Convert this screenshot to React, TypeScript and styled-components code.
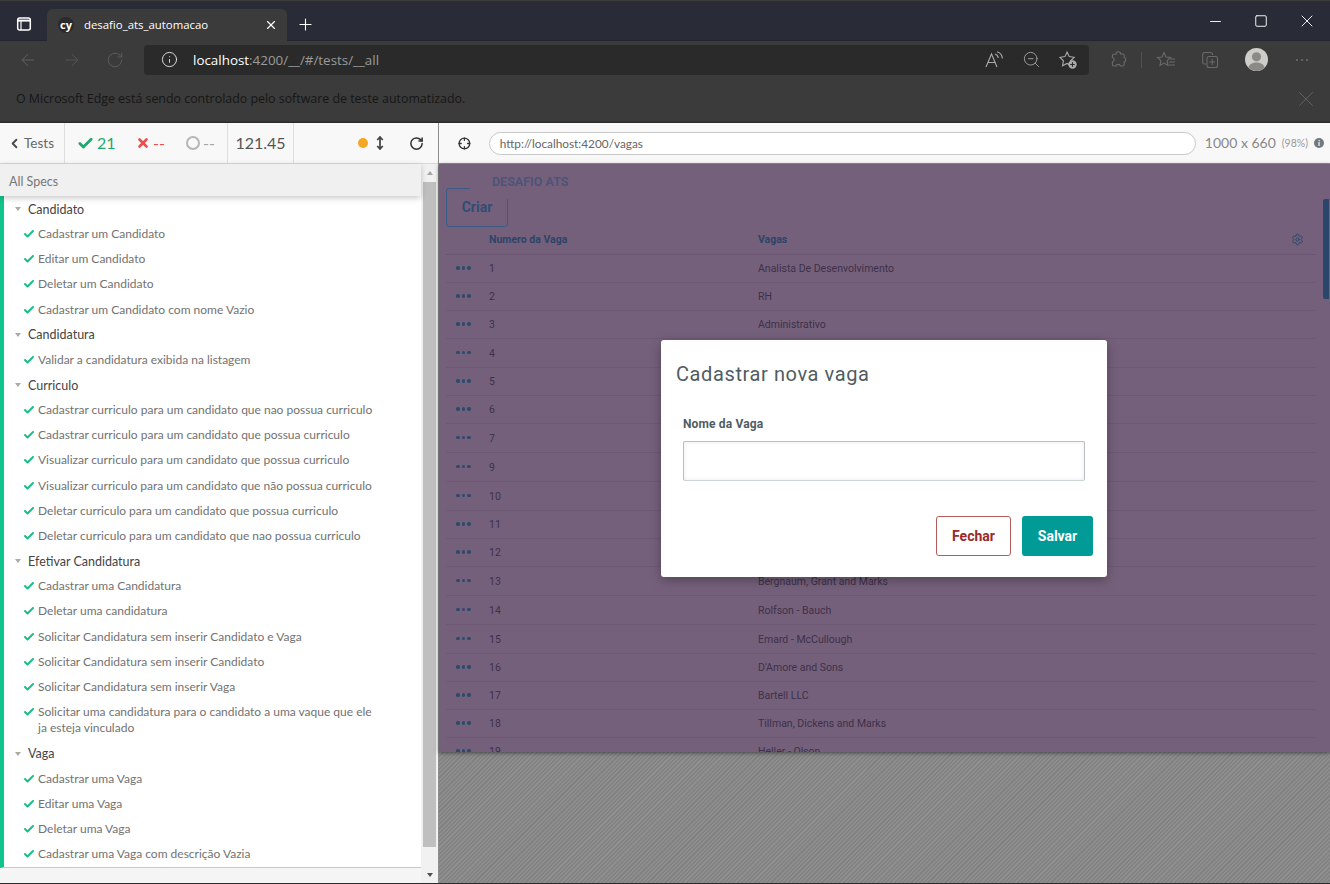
import React from "react";
import styled, { createGlobalStyle } from "styled-components";
import { Check, X, ChevronLeft, Plus, ArrowLeft, ArrowRight, RotateCw, Info, ZoomOut, Minus, Square, Settings, MoveVertical, Crosshair } from "lucide-react";

const GlobalStyle = createGlobalStyle`
  html, body { margin: 0; padding: 0; width: 1330px; height: 884px; overflow: hidden; background: #3b3b3b; }
  * { box-sizing: border-box; }
`;

const MULI = `"Lato", "Open Sans", sans-serif`;
const UI = `"Open Sans", "Noto Sans", sans-serif`;
const ROBOTO = `Roboto, "Liberation Sans", sans-serif`;

const suites: { name: string; tests: string[] }[] = [
  { name: "Candidato", tests: ["Cadastrar um Candidato", "Editar um Candidato", "Deletar um Candidato", "Cadastrar um Candidato com nome Vazio"] },
  { name: "Candidatura", tests: ["Validar a candidatura exibida na listagem"] },
  {
    name: "Curriculo",
    tests: [
      "Cadastrar curriculo para um candidato que nao possua curriculo",
      "Cadastrar curriculo para um candidato que possua curriculo",
      "Visualizar curriculo para um candidato que possua curriculo",
      "Visualizar curriculo para um candidato que não possua curriculo",
      "Deletar curriculo para um candidato que possua curriculo",
      "Deletar curriculo para um candidato que nao possua curriculo",
    ],
  },
  {
    name: "Efetivar Candidatura",
    tests: [
      "Cadastrar uma Candidatura",
      "Deletar uma candidatura",
      "Solicitar Candidatura sem inserir Candidato e Vaga",
      "Solicitar Candidatura sem inserir Candidato",
      "Solicitar Candidatura sem inserir Vaga",
      "Solicitar uma candidatura para o candidato a uma vaque que ele ja esteja vinculado",
    ],
  },
  { name: "Vaga", tests: ["Cadastrar uma Vaga", "Editar uma Vaga", "Deletar uma Vaga", "Cadastrar uma Vaga com descrição Vazia"] },
];

const vagas: [string, string, number][] = [
  ["1", "Analista De Desenvolvimento", 28],
  ["2", "RH", 28],
  ["3", "Administrativo", 28],
  ["4", "", 29],
  ["5", "", 28],
  ["6", "", 28],
  ["7", "", 29],
  ["9", "", 29],
  ["10", "", 29],
  ["11", "", 28],
  ["12", "", 28],
  ["13", "Bergnaum, Grant and Marks", 29],
  ["14", "Rolfson - Bauch", 29],
  ["15", "Emard - McCullough", 29],
  ["16", "D'Amore and Sons", 28],
  ["17", "Bartell LLC", 28],
  ["18", "Tillman, Dickens and Marks", 28],
  ["19", "Heller - Olson", 28],
];

const App = () => {
  return (
    <Page>
      <GlobalStyle />
      <TitleBar>
        <TabsIcon>
          <svg width="16" height="16" viewBox="0 0 16 16" fill="none" stroke="#fff" strokeWidth="1.5">
            <rect x="1.7" y="2" width="12.6" height="12" rx="2" />
            <path d="M1.7 4.6h12.6" strokeWidth="2" />
            <path d="M5 5v9" strokeWidth="1.2" />
          </svg>
        </TabsIcon>
        <Tab>
          <Favicon>cy</Favicon>
          <TabTitle>desafio_ats_automacao</TabTitle>
          <X size={14} color="#fff" strokeWidth={2} />
        </Tab>
        <NewTab>
          <Plus size={19} color="#fff" strokeWidth={1.4} />
        </NewTab>
        <WindowControls>
          <Minus size={17} color="#fff" strokeWidth={1.3} />
          <Square size={14} color="#fff" strokeWidth={1.6} />
          <X size={20} color="#fff" strokeWidth={1.1} />
        </WindowControls>
      </TitleBar>

      <Toolbar>
        <NavGroup>
          <ArrowLeft size={20} color="#5f5f5f" strokeWidth={1.2} />
          <ArrowRight size={20} color="#555" strokeWidth={1.2} />
          <RotateCw size={18} color="#5f5f5f" strokeWidth={1.2} />
        </NavGroup>
        <AddressBar>
          <Info size={17} color="#e8e8e8" strokeWidth={1.3} />
          <Url>
            <b>localhost</b>:4200/__/#/tests/__all
          </Url>
          <AddressIcons>
            <ReadAloud>
              <svg width="20" height="18" viewBox="0 0 20 18" fill="none" stroke="#aaa" strokeWidth="1.1">
                <path d="M1 16 6.5 3 12 16M3 11.5h7" />
                <path d="M10 3c2 .6 3 2 3.3 4M12 .8c3 .8 5 3.2 5.4 6.6" />
              </svg>
            </ReadAloud>
            <ZoomOut size={19} color="#aaa" strokeWidth={1.1} />
            <svg width="20" height="20" viewBox="0 0 20 20" fill="none">
              <path d="M9 2l2.2 4.6 5 .7-3.6 3.5.8 5-4.4-2.4-4.4 2.4.8-5L2 7.3l5-.7z" stroke="#aaa" strokeWidth="1.1" />
              <circle cx="14.5" cy="14.5" r="4.2" fill="#aaa" />
              <path d="M14.5 12.3v4.4M12.3 14.5h4.4" stroke="#2a2a2a" strokeWidth="1.1" />
            </svg>
          </AddressIcons>
        </AddressBar>
        <ToolIcons>
          <ToolSlot $left={21}>
            <svg width="17" height="17" viewBox="0 0 17 17" fill="none" stroke="#6a6a6a" strokeWidth="1.1">
              <path d="M6 3.2a2.3 2.3 0 0 1 4.6-.2h2.4a1.2 1.2 0 0 1 1.2 1.2v2.3a2.3 2.3 0 0 1 0 4.4v2.4A1.6 1.6 0 0 1 12.6 15H10.4a2.3 2.3 0 0 0-4.4 0H4a1.6 1.6 0 0 1-1.6-1.6V11a2.3 2.3 0 0 0 0-4.5V4.4A1.2 1.2 0 0 1 3.6 3.2z" />
            </svg>
          </ToolSlot>
          <ToolSlot $left={14}>
            <Separator />
          </ToolSlot>
          <ToolSlot $left={14}>
            <svg width="20" height="18" viewBox="0 0 20 18" fill="none" stroke="#6a6a6a" strokeWidth="1.1">
              <path d="M8 1.5l2 4.5 4.5.5-3.4 3.2.9 4.8-4-2.4-4 2.4.9-4.8L1.5 6.5 6 6zM14 8h5M13 11h6M13 14h6" />
            </svg>
          </ToolSlot>
          <ToolSlot $left={25}>
            <svg width="18" height="18" viewBox="0 0 18 18" fill="none" stroke="#6a6a6a" strokeWidth="1.1">
              <path d="M5 13H3.5A1.8 1.8 0 0 1 1.7 11.2V3.5a2 2 0 0 1 2-2h5.5a2.4 2.4 0 0 1 2.4 2.4" />
              <rect x="6" y="5.5" width="10.5" height="11" rx="2" />
              <path d="M11.2 8v6M8.2 11h6" />
            </svg>
          </ToolSlot>
          <ToolSlot $left={26}>
            <svg width="23" height="23" viewBox="0 0 23 23">
              <circle cx="11.5" cy="11.5" r="11.5" fill="#cfcdca" />
              <circle cx="11.5" cy="8.8" r="4.6" fill="#8c8a87" />
              <path d="M3.4 19.6c1-3.6 4.2-5 8.1-5s7.1 1.4 8.1 5a11.5 11.5 0 0 1-16.2 0z" fill="#8c8a87" />
            </svg>
          </ToolSlot>
          <Dots>
            <i />
            <i />
            <i />
          </Dots>
        </ToolIcons>
      </Toolbar>

      <InfoBar>
        <span>O Microsoft Edge está sendo controlado pelo software de teste automatizado.</span>
        <X size={26} color="#666" strokeWidth={0.8} />
      </InfoBar>

      <Main>
        <Reporter>
          <StatsBar>
            <BackCell>
              <ChevronLeft size={15} color="#4a4a4a" strokeWidth={3} />
              Tests
            </BackCell>
            <StatsCell>
              <Stat $color="#1fa971" $width={59}>
                <Check size={17} color="#1fa971" strokeWidth={4} />
                21
              </Stat>
              <Stat $color="#e94f4f" $width={50}>
                <X size={14} color="#e94f4f" strokeWidth={4.5} />
                --
              </Stat>
              <Stat $color="#a5a5a5" $width={40}>
                <PendingRing />
                --
              </Stat>
            </StatsCell>
            <DurationCell>121.45</DurationCell>
            <ControlsCell>
              <Dot />
              <MoveVertical size={14} color="#444" strokeWidth={3} />
              <Reload>
                <RotateCw size={15} color="#333" strokeWidth={2.4} />
              </Reload>
            </ControlsCell>
          </StatsBar>
          <SpecsArea>
            <SpecsColumn>
              <AllSpecs>All Specs</AllSpecs>
              <SpecList>
                {suites.map((suite) => (
                  <Suite key={suite.name}>
                    <SuiteName>
                      <Caret />
                      {suite.name}
                    </SuiteName>
                    {suite.tests.map((test) => (
                      <TestRow key={test}>
                        <Check size={12} color="#1bbd8a" strokeWidth={4} />
                        <span>{test}</span>
                      </TestRow>
                    ))}
                  </Suite>
                ))}
              </SpecList>
              <BottomStrip />
            </SpecsColumn>
            <ScrollTrack>
              <ArrowUp />
              <ScrollThumb />
              <ArrowDown />
            </ScrollTrack>
          </SpecsArea>
        </Reporter>

        <Runner>
          <UrlBar>
            <Crosshair size={15} color="#333" strokeWidth={2.4} />
            <UrlField>http://localhost:4200/vagas</UrlField>
            <ViewSize>1000 x 660</ViewSize>
            <Percent>(98%)</Percent>
            <InfoDot>i</InfoDot>
          </UrlBar>
          <Stage>
            <AppFrame>
              <Brand>DESAFIO ATS</Brand>
              <CreateButton>Criar</CreateButton>
              <TableHead>
                <ActionCol />
                <NumberCol>Numero da Vaga</NumberCol>
                <NameCol>Vagas</NameCol>
                <Settings size={13} color="#2c4468" strokeWidth={1.8} />
              </TableHead>
              {vagas.map(([num, name, h]) => (
                <TableRow key={num} $h={h}>
                  <ActionCol>
                    <RowDots>
                      <i />
                      <i />
                      <i />
                    </RowDots>
                  </ActionCol>
                  <NumberCol>{num}</NumberCol>
                  <NameCol>{name}</NameCol>
                </TableRow>
              ))}
              <PageScroll />
              <Modal>
                <ModalTitle>Cadastrar nova vaga</ModalTitle>
                <FieldLabel>Nome da Vaga</FieldLabel>
                <FieldInput />
                <ModalFooter>
                  <CloseButton>Fechar</CloseButton>
                  <SaveButton>Salvar</SaveButton>
                </ModalFooter>
              </Modal>
            </AppFrame>
            <Hatch />
          </Stage>
        </Runner>
      </Main>
    </Page>
  );
};

const Page = styled.div`
  width: 1330px;
  height: 884px;
  display: flex;
  flex-direction: column;
  overflow: hidden;
  background: #2b2b2b;
`;

const TitleBar = styled.div`
  height: 41px;
  flex: none;
  display: flex;
  align-items: flex-end;
  background: #292c36;
  border-top: 1px solid #3c3c3c;
  border-bottom: 1px solid #24262e;
`;

const TabsIcon = styled.div`
  width: 47px;
  height: 32px;
  display: flex;
  align-items: center;
  justify-content: center;
  padding-bottom: 1px;
`;

const Tab = styled.div`
  width: 240px;
  height: 32px;
  margin-bottom: -1px;
  display: flex;
  align-items: center;
  padding: 0 9px 0 11px;
  background: #3b3b3b;
  border-radius: 6px 6px 0 0;
`;

const Favicon = styled.div`
  width: 16px;
  height: 16px;
  border-radius: 50%;
  background: #2a2a2a;
  color: #fff;
  font: 700 11px/15px ${UI};
  text-align: center;
`;

const TabTitle = styled.div`
  flex: 1;
  margin-left: 10px;
  color: #fff;
  font: 400 11.4px/16px ${UI};
`;

const NewTab = styled.div`
  width: 36px;
  height: 32px;
  display: flex;
  align-items: center;
  justify-content: center;
`;

const WindowControls = styled.div`
  margin-left: auto;
  width: 130px;
  height: 40px;
  padding: 2px 13px 0 7px;
  display: flex;
  align-items: center;
  justify-content: space-between;
`;

const Toolbar = styled.div`
  height: 37px;
  flex: none;
  display: flex;
  align-items: center;
  background: #3b3b3b;
`;

const NavGroup = styled.div`
  width: 144px;
  padding: 0 18px;
  display: flex;
  align-items: center;
  gap: 24px;
`;

const AddressBar = styled.div`
  width: 945px;
  height: 30px;
  padding: 0 11px 0 17px;
  display: flex;
  align-items: center;
  background: #2a2a2a;
  border-radius: 4px;
`;

const Url = styled.div`
  margin-left: 15px;
  color: #9a9a9a;
  font: 400 13.4px/18px ${UI};
  b {
    font-weight: 400;
    color: #fff;
  }
`;

const AddressIcons = styled.div`
  margin-left: auto;
  display: flex;
  align-items: center;
  gap: 17px;
`;

const ReadAloud = styled.div`
  display: flex;
`;

const ToolIcons = styled.div`
  flex: 1;
  padding-right: 22px;
  display: flex;
  align-items: center;
`;

const ToolSlot = styled.div<{ $left: number }>`
  display: flex;
  margin-left: ${(p) => p.$left}px;
`;

const Separator = styled.div`
  width: 1px;
  height: 16px;
  background: #505050;
`;

const Dots = styled.div`
  margin-left: auto;
  display: flex;
  gap: 3px;
  i {
    width: 2px;
    height: 2px;
    border-radius: 50%;
    background: #6f6f6f;
  }
`;

const InfoBar = styled.div`
  height: 44px;
  flex: none;
  padding: 0 11px 1px 16px;
  display: flex;
  align-items: center;
  justify-content: space-between;
  background: #3b3b3b;
  color: #161616;
  font: 400 12.4px/16px ${UI};
  border-bottom: 1px solid #333;
`;

const Main = styled.div`
  flex: 1;
  min-height: 0;
  display: flex;
  border-top: 1px solid #2a2a2a;
  margin-bottom: 1px;
`;

const Reporter = styled.div`
  width: 439px;
  flex: none;
  display: flex;
  flex-direction: column;
  background: #f0f0f0;
  border-right: 1px solid #8e8e8e;
`;

const StatsBar = styled.div`
  height: 41px;
  flex: none;
  display: flex;
  background: #f8f8f8;
  border-bottom: 1px solid #d9d9d9;
  color: #555;
  font: 400 15px/40px ${MULI};
`;

const BackCell = styled.div`
  width: 65px;
  flex: none;
  padding-left: 7px;
  display: flex;
  align-items: center;
  gap: 2px;
  font-size: 13.5px;
  color: #666;
  border-right: 1px solid #ddd;
`;

const StatsCell = styled.div`
  width: 163px;
  flex: none;
  padding-left: 12px;
  display: flex;
  align-items: center;
  border-right: 1px solid #ddd;
`;

const Stat = styled.div<{ $color: string; $width: number }>`
  width: ${(p) => p.$width}px;
  flex: none;
  display: flex;
  align-items: center;
  gap: 3px;
  color: ${(p) => p.$color};
  font-size: 16px;
`;

const PendingRing = styled.div`
  width: 14px;
  height: 14px;
  border-radius: 50%;
  border: 2px solid #b5b5b5;
`;

const DurationCell = styled.div`
  width: 66px;
  flex: none;
  text-align: center;
  font-size: 16px;
  color: #555;
  border-right: 1px solid #ddd;
`;

const ControlsCell = styled.div`
  flex: 1;
  display: flex;
  align-items: center;
  gap: 5px;
  padding-left: 64px;
`;

const Dot = styled.div`
  width: 10px;
  height: 10px;
  border-radius: 50%;
  background: #f5a623;
`;

const Reload = styled.div`
  display: flex;
  margin-left: 17px;
`;

const SpecsArea = styled.div`
  flex: 1;
  min-height: 0;
  display: flex;
`;

const SpecsColumn = styled.div`
  width: 421px;
  flex: none;
  display: flex;
  flex-direction: column;
  min-height: 0;
`;

const AllSpecs = styled.div`
  height: 32px;
  flex: none;
  padding-left: 9px;
  background: #f0f0f0;
  color: #777;
  font: 400 12.5px/35px ${MULI};
  box-shadow: 0 2px 6px rgba(0, 0, 0, 0.22);
  position: relative;
`;

const SpecList = styled.div`
  flex: 1;
  min-height: 0;
  overflow: hidden;
  background: #fff;
  border-left: 4px solid #11c48c;
  border-bottom: 1px solid #c9c9c9;
`;

const Suite = styled.div`
  display: flex;
  flex-direction: column;
`;

const SuiteName = styled.div`
  height: 25px;
  display: flex;
  align-items: center;
  padding: 1px 0 0 11px;
  color: #444;
  font: 400 12.5px/25px ${MULI};
`;

const Caret = styled.div`
  width: 0;
  height: 0;
  margin-right: 7px;
  border-left: 3.5px solid transparent;
  border-right: 3.5px solid transparent;
  border-top: 4px solid #aaa;
`;

const TestRow = styled.div`
  display: flex;
  align-items: flex-start;
  padding: 5px 45px 4px 19px;
  color: #727272;
  font: 400 12px/16.2px ${MULI};
  svg {
    flex: none;
    margin: 2px 3px 0 0;
  }
  span {
    flex: 1;
  }
`;

const BottomStrip = styled.div`
  height: 15px;
  flex: none;
  background: #f5f5f5;
`;

const ScrollTrack = styled.div`
  flex: 1;
  display: flex;
  flex-direction: column;
  align-items: center;
  background: #f1f1f1;
`;

const ArrowUp = styled.div`
  width: 0;
  height: 0;
  margin: 7px 0 7px;
  border-left: 3.5px solid transparent;
  border-right: 3.5px solid transparent;
  border-bottom: 4px solid #a5a5a5;
`;

const ScrollThumb = styled.div`
  width: 13px;
  flex: 1;
  background: #bfbfbf;
`;

const ArrowDown = styled.div`
  width: 0;
  height: 0;
  margin: 26px 0 6px;
  border-left: 3.5px solid transparent;
  border-right: 3.5px solid transparent;
  border-top: 4px solid #505050;
`;

const Runner = styled.div`
  flex: 1;
  min-width: 0;
  display: flex;
  flex-direction: column;
`;

const UrlBar = styled.div`
  height: 41px;
  flex: none;
  padding: 0 6px 0 19px;
  display: flex;
  align-items: center;
  background: #f8f8f8;
  border-bottom: 1px solid #9a8ba0;
`;

const UrlField = styled.div`
  width: 707px;
  flex: none;
  height: 23px;
  margin-left: 18px;
  padding-left: 10px;
  border: 1px solid #c8c8c8;
  border-radius: 12px;
  background: #fff;
  color: #666;
  font: 400 11.8px/21px ${MULI};
`;

const ViewSize = styled.div`
  margin-left: 9px;
  white-space: nowrap;
  color: #888;
  font: 400 14px/18px ${MULI};
`;

const Percent = styled.div`
  margin-left: 6px;
  white-space: nowrap;
  color: #999;
  font: 400 10.5px/18px ${MULI};
`;

const InfoDot = styled.div`
  width: 10px;
  height: 10px;
  flex: none;
  margin-left: 6px;
  border-radius: 50%;
  background: #777;
  color: #fff;
  font: 700 8px/10px ${MULI};
  text-align: center;
`;

const Stage = styled.div`
  flex: 1;
  min-height: 0;
  display: flex;
  flex-direction: column;
`;

const AppFrame = styled.div`
  position: relative;
  height: 588px;
  flex: none;
  overflow: hidden;
  padding: 0 14px 0 7px;
  background: #75607b;
  font-family: ${ROBOTO};
  box-shadow: 0 1px 4px rgba(0, 0, 0, 0.5);
  z-index: 1;
`;

const Brand = styled.div`
  height: 24px;
  padding: 11px 0 0 46px;
  color: #4d5478;
  font: 700 12.5px/14px ${ROBOTO};
`;

const CreateButton = styled.div`
  position: relative;
  width: 62px;
  height: 39px;
  border: 1px solid #3b5a86;
  border-radius: 3px;
  color: #324c75;
  font: 700 14px/37px ${ROBOTO};
  text-align: center;
  &::after {
    content: "";
    position: absolute;
    top: -1px;
    right: -1px;
    width: 38px;
    height: 11px;
    background: #75607b;
  }
`;

const TableHead = styled.div`
  height: 28px;
  display: flex;
  align-items: center;
  padding: 0 12px 2px 0;
  border-bottom: 1px solid #6b5672;
  color: #2c4468;
  font: 700 10.5px/14px ${ROBOTO};
`;

const TableRow = styled.div<{ $h: number }>`
  height: ${(p) => p.$h}px;
  flex: none;
  display: flex;
  align-items: center;
  padding-top: 1px;
  border-bottom: 1px solid #6e5974;
  color: #3d3049;
  font: 400 10.5px/14px ${ROBOTO};
`;

const ActionCol = styled.div`
  width: 43px;
  flex: none;
  padding-left: 10px;
`;

const NumberCol = styled.div`
  width: 269px;
  flex: none;
`;

const NameCol = styled.div`
  flex: 1;
`;

const RowDots = styled.div`
  display: flex;
  gap: 2px;
  padding-bottom: 2px;
  i {
    width: 3.5px;
    height: 3.5px;
    border-radius: 50%;
    background: #2b4a6c;
  }
`;

const PageScroll = styled.div`
  position: absolute;
  top: 35px;
  right: 1px;
  width: 6px;
  height: 100px;
  border-radius: 2px 0 0 2px;
  background: #2a466c;
`;

const Modal = styled.div`
  position: absolute;
  left: 222px;
  top: 176px;
  width: 446px;
  height: 237px;
  padding: 21px 14px 21px 15px;
  background: #fff;
  border-radius: 3px;
  box-shadow: 0 3px 12px rgba(0, 0, 0, 0.3);
  display: flex;
  flex-direction: column;
`;

const ModalTitle = styled.div`
  color: #4f5d63;
  font: 400 20px/26px ${ROBOTO};
  letter-spacing: 0.6px;
`;

const FieldLabel = styled.div`
  margin: 29px 0 0 7px;
  color: #4f5d63;
  font: 700 12px/16px ${ROBOTO};
  letter-spacing: 0.15px;
`;

const FieldInput = styled.div`
  margin: 9px 8px 0 7px;
  height: 40px;
  border: 1px solid #b9bfc1;
  border-bottom-color: #cfd4d6;
  border-radius: 2px;
  box-shadow: inset 0 0 4px rgba(0, 0, 0, 0.08);
`;

const ModalFooter = styled.div`
  margin-top: auto;
  display: flex;
  justify-content: flex-end;
  gap: 11px;
`;

const CloseButton = styled.div`
  width: 75px;
  height: 40px;
  border: 1px solid #b65c5c;
  border-radius: 3px;
  color: #9a2a2a;
  font: 700 14px/38px ${ROBOTO};
  text-align: center;
`;

const SaveButton = styled.div`
  width: 71px;
  height: 40px;
  border-radius: 3px;
  background: #009a97;
  color: #fff;
  font: 700 14px/40px ${ROBOTO};
  text-align: center;
`;

const Hatch = styled.div`
  flex: 1;
  background: repeating-linear-gradient(-45deg, #8e8e8e 0 1.5px, #828282 1.5px 3px);
`;

export default App;
